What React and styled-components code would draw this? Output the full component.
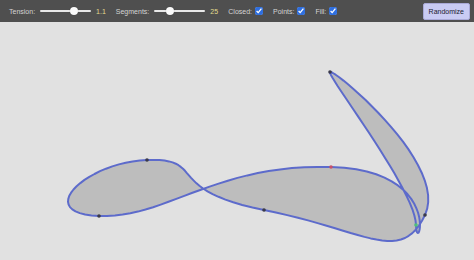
import React, { useMemo } from 'react';
import styled, { createGlobalStyle } from 'styled-components';

const GlobalStyle = createGlobalStyle`
  html, body {
    margin: 0;
    padding: 0;
    background: #e1e1e1;
    font-family: "Liberation Sans", Arial, sans-serif;
  }
`;

const Page = styled.div`
  width: 474px;
  height: 260px;
  display: flex;
  flex-direction: column;
  overflow: hidden;
`;

const Toolbar = styled.div`
  height: 22px;
  flex: none;
  background: #4f4f4f;
  display: flex;
  align-items: center;
  padding: 0 4px 0 9px;
  font-size: 7px;
  color: #d4d4d4;
`;

const Group = styled.label`
  display: flex;
  align-items: center;
  gap: ${p => p.gap || 5}px;
  margin-right: ${p => p.space || 10}px;
`;

const Value = styled.span`
  color: #e3dc8e;
  min-width: 8px;
`;

const Slider = styled.input`
  -webkit-appearance: none;
  appearance: none;
  width: 51px;
  height: 8px;
  margin: 0;
  background: transparent;

  &::-webkit-slider-runnable-track {
    height: 1.5px;
    background: #e8e8e8;
    border-radius: 1px;
  }
  &::-webkit-slider-thumb {
    -webkit-appearance: none;
    width: 8px;
    height: 8px;
    margin-top: -3.25px;
    border-radius: 50%;
    background: #fafafa;
    box-shadow: 0 0 1px rgba(0, 0, 0, 0.4);
  }
`;

const Check = styled.input`
  width: 8px;
  height: 8px;
  margin: 0;
  accent-color: #2f6fe0;
`;

const Spacer = styled.div`
  flex: 1;
`;

const Button = styled.button`
  height: 17px;
  padding: 0 5px;
  border: 1px solid #a9a9d6;
  border-radius: 2px;
  background: #c9cbf3;
  color: #202030;
  font-family: "Liberation Sans", Arial, sans-serif;
  font-size: 7px;
  margin-top: 1px;
`;

const Canvas = styled.svg`
  display: block;
  flex: 1;
  width: 474px;
`;

const points = [
  [331, 167],
  [416, 225],
  [330, 72],
  [425, 215],
  [264, 210],
  [147, 160],
  [99, 216],
];

function curvePoints(pts, tension, segments) {
  const n = pts.length;
  const out = [];
  for (let i = 0; i < n; i++) {
    const p0 = pts[(i - 1 + n) % n];
    const p1 = pts[i];
    const p2 = pts[(i + 1) % n];
    const p3 = pts[(i + 2) % n];
    const t1x = (p2[0] - p0[0]) * tension;
    const t1y = (p2[1] - p0[1]) * tension;
    const t2x = (p3[0] - p1[0]) * tension;
    const t2y = (p3[1] - p1[1]) * tension;
    for (let s = 0; s < segments; s++) {
      const t = s / segments;
      const t2 = t * t;
      const t3 = t2 * t;
      const c1 = 2 * t3 - 3 * t2 + 1;
      const c2 = -2 * t3 + 3 * t2;
      const c3 = t3 - 2 * t2 + t;
      const c4 = t3 - t2;
      out.push([
        c1 * p1[0] + c2 * p2[0] + c3 * t1x + c4 * t2x,
        c1 * p1[1] + c2 * p2[1] + c3 * t1y + c4 * t2y,
      ]);
    }
  }
  return out;
}

const dotColor = i => (i === 0 ? '#c8506a' : i === points.length - 6 ? '#4cc07a' : '#3a3a4a');

export default function App() {
  const d = useMemo(() => {
    const c = curvePoints(points, 1.1, 25);
    return 'M' + c.map(p => p[0].toFixed(1) + ' ' + p[1].toFixed(1)).join(' L') + ' Z';
  }, []);

  return (
    <Page>
      <GlobalStyle />
      <Toolbar>
        <Group>
          Tension:
          <Slider type="range" min={-1} max={2} step={0.1} defaultValue={1.1} />
          <Value>1.1</Value>
        </Group>
        <Group>
          Segments:
          <Slider type="range" min={1} max={90} defaultValue={25} />
          <Value>25</Value>
        </Group>
        <Group gap={3}>
          Closed:
          <Check type="checkbox" defaultChecked />
        </Group>
        <Group gap={3}>
          Points:
          <Check type="checkbox" defaultChecked />
        </Group>
        <Group gap={3}>
          Fill:
          <Check type="checkbox" defaultChecked />
        </Group>
        <Spacer />
        <Button>Randomize</Button>
      </Toolbar>
      <Canvas viewBox="0 22 474 238">
        <path d={d} fill="#bdbdbd" stroke="#5d6bcb" strokeWidth="2" fillRule="nonzero" strokeLinejoin="round" />
        {points.map((p, i) => (
          <circle key={i} cx={p[0]} cy={p[1]} r="1.8" fill={dotColor(i)} />
        ))}
      </Canvas>
    </Page>
  );
}
